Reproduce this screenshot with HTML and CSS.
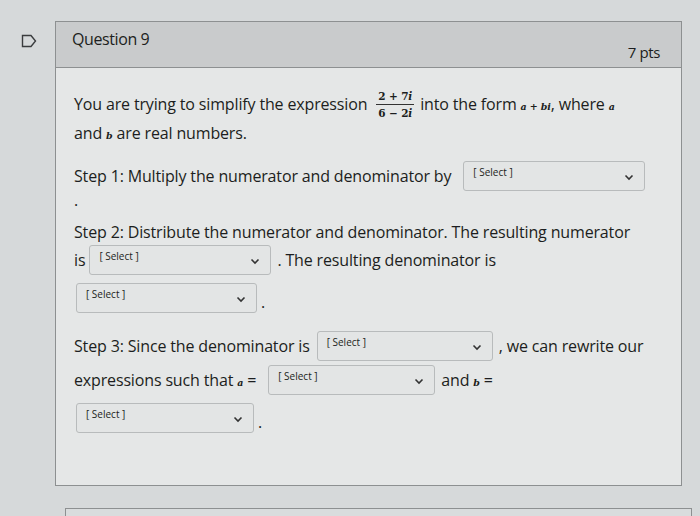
FILE: index.html
```html
<!DOCTYPE html>
<html>
<head>
<meta charset="utf-8">
<link rel="stylesheet" href="styles.css">
</head>
<body>
<div class="page">
  <div class="flag">
    <svg width="16" height="14" viewBox="0 0 16 14"><path d="M1.5 1.5 H10 L14.5 7 L10 12.5 H1.5 Z" fill="none" stroke="#3a3c3e" stroke-width="1.4"/></svg>
  </div>
  <div class="card">
    <div class="head">
      <span class="qtitle">Question 9</span>
      <span class="pts">7 pts</span>
    </div>
    <div class="body">
      <div class="para intro">
        <div class="ln h30"><span>You are trying to simplify the expression</span><span class="frac"><span class="num">2 + 7<i>i</i></span><span class="den">6 − 2<i>i</i></span></span><span>into the form <span class="m">a + bi</span>, where <span class="m">a</span></span></div>
        <div class="ln h28"><span>and <span class="m">b</span> are real numbers.</span></div>
      </div>
      <div class="para s1">
        <div class="ln h30"><span>Step 1: Multiply the numerator and denominator by</span><span class="sel w182 ml"><span class="lbl">[ Select ]</span><svg class="chev" width="10" height="7" viewBox="0 0 10 7"><path d="M1.5 1.5 L5 5 L8.5 1.5" fill="none" stroke="#333" stroke-width="1.6"/></svg></span></div>
        <div class="ln h18"><span>.</span></div>
      </div>
      <div class="para s2">
        <div class="ln h26"><span>Step 2: Distribute the numerator and denominator. The resulting numerator</span></div>
        <div class="ln h30"><span>is</span><span class="sel w182 ms"><span class="lbl">[ Select ]</span><svg class="chev" width="10" height="7" viewBox="0 0 10 7"><path d="M1.5 1.5 L5 5 L8.5 1.5" fill="none" stroke="#333" stroke-width="1.6"/></svg></span><span>. The resulting denominator is</span></div>
        <div class="ln h40 first"><span class="sel w181"><span class="lbl">[ Select ]</span><svg class="chev" width="10" height="7" viewBox="0 0 10 7"><path d="M1.5 1.5 L5 5 L8.5 1.5" fill="none" stroke="#333" stroke-width="1.6"/></svg></span><span class="dot">.</span></div>
      </div>
      <div class="para s3">
        <div class="ln h30"><span>Step 3: Since the denominator is</span><span class="sel w176"><span class="lbl">[ Select ]</span><svg class="chev" width="10" height="7" viewBox="0 0 10 7"><path d="M1.5 1.5 L5 5 L8.5 1.5" fill="none" stroke="#333" stroke-width="1.6"/></svg></span><span>, we can rewrite our</span></div>
        <div class="ln h38"><span>expressions such that <span class="m">a</span> =</span><span class="sel w167 ml"><span class="lbl">[ Select ]</span><svg class="chev" width="10" height="7" viewBox="0 0 10 7"><path d="M1.5 1.5 L5 5 L8.5 1.5" fill="none" stroke="#333" stroke-width="1.6"/></svg></span><span>and <span class="m">b</span> =</span></div>
        <div class="ln h36 first"><span class="sel w178"><span class="lbl">[ Select ]</span><svg class="chev" width="10" height="7" viewBox="0 0 10 7"><path d="M1.5 1.5 L5 5 L8.5 1.5" fill="none" stroke="#333" stroke-width="1.6"/></svg></span><span class="dot">.</span></div>
      </div>
    </div>
  </div>
  <div class="card next"></div>
</div>
</body>
</html>
```
FILE: styles.css
```css
html, body {
  margin: 0;
  padding: 0;
}
body {
  background: #d6d9da;
  font-family: "Open Sans", "Liberation Sans", sans-serif;
  color: #1c1e20;
  width: 700px;
  height: 516px;
  overflow: hidden;
}
.page {
  position: relative;
  padding: 21px 20px 0 55px;
}
.flag {
  position: absolute;
  left: 21px;
  top: 31px;
}
.card {
  width: 625px;
  border: 1px solid #8d9091;
  background: #e5e7e7;
}
.head {
  background: #c9cbcc;
  border-bottom: 1px solid #8d9091;
  height: 45px;
  display: flex;
  justify-content: space-between;
  padding: 0 21px 0 16px;
}
.qtitle {
  font-size: 16px;
  margin-top: 6px;
  letter-spacing: -0.4px;
}
.pts {
  font-size: 15px;
  margin-top: 20px;
  letter-spacing: -0.4px;
}
.body {
  padding: 21px 18px 50px 18px;
}
.para {
  font-size: 16px;
  letter-spacing: -0.15px;
}
.ln {
  display: flex;
  align-items: center;
  white-space: pre;
}
.h18 { height: 18px; }
.h26 { height: 26px; }
.h28 { height: 28px; }
.h30 { height: 30px; }
.h36 { height: 36px; }
.h38 { height: 38px; }
.h40 { height: 40px; }
.s1 { margin-top: 14px; }
.s2 { margin-top: 10px; }
.s3 { margin-top: 16px; }
.frac {
  display: flex;
  flex-direction: column;
  align-items: center;
  font-family: "DejaVu Serif", "Liberation Serif", serif;
  font-size: 10.5px;
  font-weight: bold;
  line-height: 12px;
  margin: 0 6px 0 9px;
}
.num {
  padding: 0 2px 2px;
  border-bottom: 1px solid #333;
}
.den {
  padding-top: 2px;
}
.m {
  font-family: "DejaVu Serif", "Liberation Serif", serif;
  font-style: italic;
  font-weight: bold;
  font-size: 9.5px;
}
.sel {
  display: flex;
  align-items: center;
  justify-content: space-between;
  box-sizing: border-box;
  height: 30px;
  padding: 0 10px 0 9px;
  margin: 0 6px 0 7px;
  border: 1px solid #b8bbbc;
  border-radius: 3px;
  background: #e3e5e5;
}
.sel.ml {
  margin-left: 12px;
}
.sel.ms {
  margin-left: 4px;
}
.first .sel {
  margin-left: 2px;
  align-self: flex-end;
  margin-bottom: 2px;
}
.dot {
  align-self: flex-end;
  margin-bottom: 2px;
  margin-left: -2px;
}
.lbl {
  font-size: 10px;
  letter-spacing: 0;
  margin-top: -8px;
}
.chev {
  margin-top: 2px;
}
.w182 { width: 182px; }
.w181 { width: 181px; }
.w176 { width: 176px; }
.w167 { width: 167px; }
.w178 { width: 178px; }
.next {
  margin-top: 22px;
  margin-left: 10px;
  height: 8px;
  border-bottom: none;
  background: #d9dcdd;
}
```
